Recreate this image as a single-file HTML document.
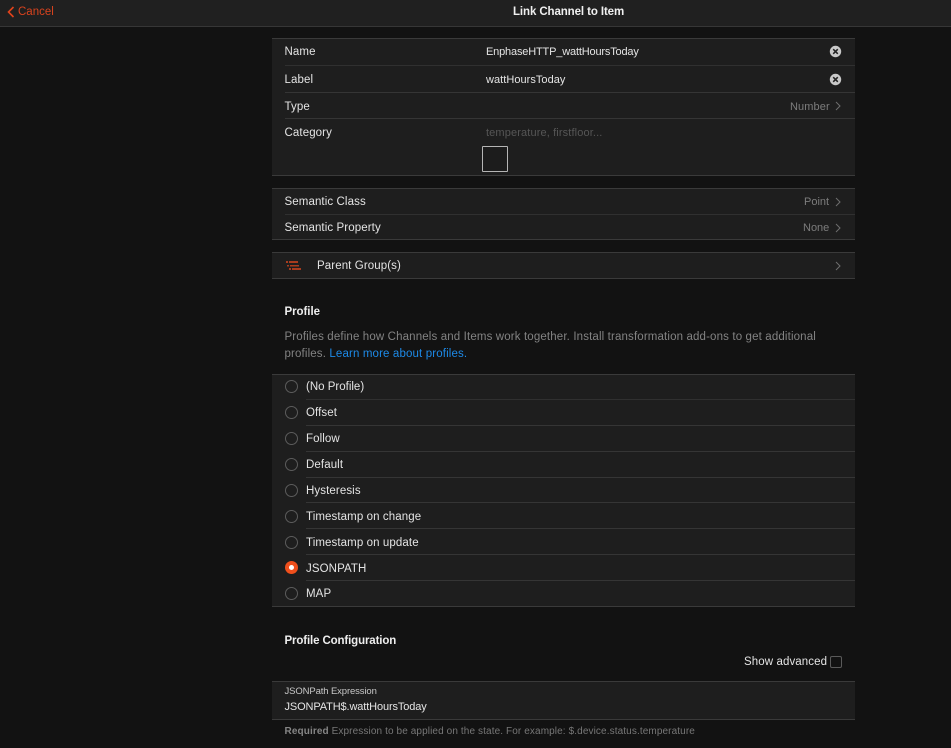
<!DOCTYPE html>
<html><head><meta charset="utf-8"><style>
html,body{margin:0;padding:0;background:#121212}
body{width:951px;height:748px;position:relative;overflow:hidden;font-family:"Liberation Sans",sans-serif;font-size:11.5px;color:#e4e4e4}
div,a,span.t{position:absolute}
.t{white-space:nowrap;line-height:14px;letter-spacing:.1px}
.p{left:272px;width:583px;background:#1e1e1e;box-sizing:border-box;border-top:1px solid #3a3a3a;border-bottom:1px solid #3a3a3a}
.l{height:1px;background:#353535;left:285px;width:570px}
.g{color:#7c7c7c}
.r{width:11px;height:11px;border:1px solid #5c5c5c;border-radius:50%;left:285px}
svg{position:absolute;overflow:visible}
</style></head><body>
<div style="left:0;top:0;width:951px;height:26px;background:#202020;border-bottom:1px solid #363636"></div>
<svg style="left:7px;top:6px" width="8" height="12"><path d="M6.5 1L1.5 6L6.5 11" fill="none" stroke="#e0431c" stroke-width="1.6"/></svg>
<span class="t" style="left:18px;top:4.500px;color:#d9431e;letter-spacing:0">Cancel</span>
<span class="t" style="left:513px;top:4.500px;color:#f0f0f0;font-weight:bold;letter-spacing:-.1px">Link Channel to Item</span>

<div class="p" style="top:38px;height:138px"></div>
<div class="l" style="top:65px;background:#303030"></div><div class="l" style="top:92px"></div><div class="l" style="top:118px"></div>
<span class="t" style="left:284.500px;top:44.500px">Name</span>
<span class="t" style="left:284.500px;top:72.500px">Label</span>
<span class="t" style="left:284.500px;top:99.500px">Type</span>
<span class="t" style="left:284.500px;top:125.500px">Category</span>
<span class="t" style="left:486px;top:45px;font-size:11px;letter-spacing:-.17px">EnphaseHTTP_wattHoursToday</span>
<span class="t" style="left:486px;top:73px;font-size:11px;letter-spacing:.04px">wattHoursToday</span>
<span class="t g" style="left:790px;top:100px;font-size:11px;letter-spacing:.1px">Number</span>
<span class="t" style="left:486px;top:126px;font-size:11px;color:#565656;letter-spacing:.13px">temperature, firstfloor...</span>
<svg style="left:830px;top:46px" width="12" height="12"><circle cx="5.500" cy="5.500" r="5.700" fill="#c8c8c8"/><path d="M3.200 3.200L7.800 7.800M7.800 3.200L3.200 7.800" stroke="#222" stroke-width="1.500"/></svg>
<svg style="left:830px;top:74px" width="12" height="12"><circle cx="5.500" cy="5.500" r="5.700" fill="#c8c8c8"/><path d="M3.200 3.200L7.800 7.800M7.800 3.200L3.200 7.800" stroke="#222" stroke-width="1.500"/></svg>
<svg style="left:835px;top:101px" width="6" height="10"><path d="M1 1L5 5L1 9" fill="none" stroke="#6e6e6e" stroke-width="1"/></svg>
<div style="left:482px;top:146px;width:24px;height:24px;border:1px solid #b5b5b5;border-radius:1px;background:#1c1c1c"></div>

<div class="p" style="top:188px;height:52px"></div>
<div class="l" style="top:214px;background:#303030"></div>
<span class="t" style="left:284.500px;top:194.500px">Semantic Class</span>
<span class="t" style="left:284.500px;top:220.500px">Semantic Property</span>
<span class="t g" style="left:804px;top:195px;font-size:11px;letter-spacing:0">Point</span>
<span class="t g" style="left:803px;top:221px;font-size:11px;letter-spacing:0">None</span>
<svg style="left:835px;top:197px" width="6" height="10"><path d="M1 1L5 5L1 9" fill="none" stroke="#6e6e6e" stroke-width="1"/></svg>
<svg style="left:835px;top:223px" width="6" height="10"><path d="M1 1L5 5L1 9" fill="none" stroke="#6e6e6e" stroke-width="1"/></svg>

<div class="p" style="top:252px;height:27px"></div>
<svg style="left:285px;top:260px" width="17" height="11" fill="#a83c1e"><rect x="1" y="1" width="2" height="2"/><rect x="4" y="1" width="9" height="2"/><rect x="2" y="5" width="2" height="1.500"/><rect x="5" y="5" width="9" height="1.500"/><rect x="4" y="8" width="2" height="2"/><rect x="7" y="8" width="9" height="2"/></svg>
<span class="t" style="left:317px;top:259px">Parent Group(s)</span>
<svg style="left:835px;top:261px" width="6" height="10"><path d="M1 1L5 5L1 9" fill="none" stroke="#6e6e6e" stroke-width="1"/></svg>

<span class="t" style="left:284.500px;top:304.500px;font-weight:bold;color:#eee;letter-spacing:-.05px">Profile</span>
<span class="t" style="left:284.500px;top:329.500px;color:#838383;letter-spacing:.14px">Profiles define how Channels and Items work together. Install transformation add-ons to get additional</span>
<span class="t" style="left:284.500px;top:346.500px;color:#838383;letter-spacing:.14px">profiles. <span style="color:#1d8ae8">Learn more about profiles.</span></span>

<div class="p" style="top:374px;height:233px"></div>
<div class="l" style="left:306px;width:549px;top:399px;background:#303030"></div>
<div class="l" style="left:306px;width:549px;top:425px"></div>
<div class="l" style="left:306px;width:549px;top:451px"></div>
<div class="l" style="left:306px;width:549px;top:477px"></div>
<div class="l" style="left:306px;width:549px;top:502px"></div>
<div class="l" style="left:306px;width:549px;top:528px"></div>
<div class="l" style="left:306px;width:549px;top:554px"></div>
<div class="l" style="left:306px;width:549px;top:580px"></div>

<div class="r" style="top:380px"></div><span class="t" style="left:306px;top:380px;letter-spacing:0">(No Profile)</span>
<div class="r" style="top:406px"></div><span class="t" style="left:306px;top:406px">Offset</span>
<div class="r" style="top:432px"></div><span class="t" style="left:306px;top:432px">Follow</span>
<div class="r" style="top:458px"></div><span class="t" style="left:306px;top:458px">Default</span>
<div class="r" style="top:484px"></div><span class="t" style="left:306px;top:484px">Hysteresis</span>
<div class="r" style="top:510px"></div><span class="t" style="left:306px;top:509.500px">Timestamp on change</span>
<div class="r" style="top:536px"></div><span class="t" style="left:306px;top:535.500px">Timestamp on update</span>
<div style="left:285px;top:561px;width:13px;height:13px;border-radius:50%;background:#ef4f1c"></div>
<div style="left:289px;top:565px;width:5px;height:5px;border-radius:50%;background:#fff"></div>
<span class="t" style="left:306px;top:561.500px">JSONPATH</span>
<div class="r" style="top:587px"></div><span class="t" style="left:306px;top:587px">MAP</span>

<span class="t" style="left:284.500px;top:633.500px;font-weight:bold;color:#eee;letter-spacing:-.13px">Profile Configuration</span>
<span class="t" style="left:744px;top:654.500px">Show advanced</span>
<div style="left:830px;top:656px;width:10px;height:10px;border:1px solid #5a5a5a;border-radius:2px"></div>

<div class="p" style="top:681px;height:39px"></div>
<span class="t" style="left:284.500px;top:684.500px;font-size:9.500px;color:#c8c8c8;letter-spacing:-.12px">JSONPath Expression</span>
<span class="t" style="left:284.500px;top:699.500px;font-size:11px;letter-spacing:-.125px">JSONPATH$.wattHoursToday</span>
<span class="t" style="left:284.500px;top:724.500px;font-size:10px;color:#777;letter-spacing:.11px"><b style="color:#858585">Required</b> Expression to be applied on the state. For example: $.device.status.temperature</span>
</body></html>
